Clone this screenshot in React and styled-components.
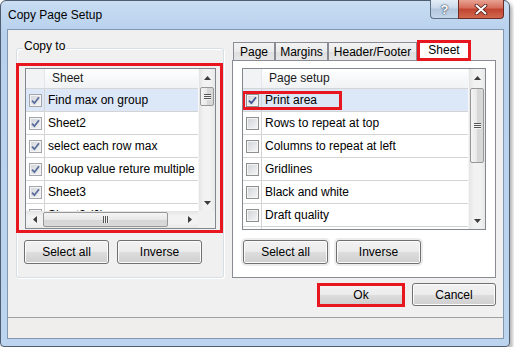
import styled, { createGlobalStyle } from "styled-components";

const GlobalStyle = createGlobalStyle`
  html, body {
    margin: 0;
    padding: 0;
    background: #fff;
  }
  body {
    font-family: "Liberation Sans", Arial, sans-serif;
    font-size: 12px;
    color: #000;
  }
  * {
    box-sizing: border-box;
  }
`;

const RED = "#e8161f";

const leftRows = [
  { label: "Find max on group", checked: true, selected: true },
  { label: "Sheet2", checked: true },
  { label: "select each row max", checked: true },
  { label: "lookup value reture multiple", checked: true },
  { label: "Sheet3", checked: true },
  { label: "Sheet3 (2)", checked: true },
];

const rightRows = [
  { label: "Print area", checked: true, selected: true, marked: true },
  { label: "Rows to repeat at top" },
  { label: "Columns to repeat at left" },
  { label: "Gridlines" },
  { label: "Black and white" },
  { label: "Draft quality" },
  { label: "" },
];

const tabs = [
  { label: "Page", width: 42 },
  { label: "Margins", width: 53 },
  { label: "Header/Footer", width: 89 },
  { label: "Sheet", width: 54, active: true },
];

const Arrow = ({ dir }) => {
  const pts = {
    up: "0,4 3.5,0 7,4",
    down: "0,0 3.5,4 7,0",
    left: "4,0 0,3.5 4,7",
    right: "0,0 4,3.5 0,7",
  }[dir];
  const vertical = dir === "up" || dir === "down";
  return (
    <svg width={vertical ? 7 : 4} height={vertical ? 4 : 7} viewBox={vertical ? "0 0 7 4" : "0 0 4 7"}>
      <polygon points={pts} fill="#3c3c3c" />
    </svg>
  );
};

const CheckBox = ({ checked, faded }) => (
  <Box $faded={faded}>
    {checked && (
      <svg width="9" height="9" viewBox="0 0 9 9">
        <path d="M1 4.6 L3.4 7.2 L8 1.2" fill="none" stroke={faded ? "#5a6e9c" : "#3f5593"} strokeWidth="1.8" />
      </svg>
    )}
  </Box>
);

const VScroll = ({ thumbTop, thumbHeight }) => (
  <VTrack>
    <ArrowCell>
      <Arrow dir="up" />
    </ArrowCell>
    <VThumbArea>
      <VThumb style={{ top: thumbTop, height: thumbHeight }}>
        <Grip $vertical />
      </VThumb>
    </VThumbArea>
    <ArrowCell>
      <Arrow dir="down" />
    </ArrowCell>
  </VTrack>
);

const ListView = ({ title, rows, width, height, thumbTop, thumbHeight, hscroll, faded }) => (
  <List style={{ width, height }}>
    <ListMain>
      <ListBody>
        <HeaderRow>
          <HeaderCheck />
          <HeaderText>{title}</HeaderText>
        </HeaderRow>
        {rows.map((r, i) => (
          <Row key={i} $selected={r.selected}>
            <CheckCell>{r.label && <CheckBox checked={r.checked} faded={faded} />}</CheckCell>
            <TextCell>{r.label}</TextCell>
            {r.marked && <RowMark />}
          </Row>
        ))}
      </ListBody>
      <VScroll thumbTop={thumbTop} thumbHeight={thumbHeight} />
    </ListMain>
    {hscroll && (
      <HScrollRow>
        <HTrack>
          <HArrowCell>
            <Arrow dir="left" />
          </HArrowCell>
          <HThumbArea>
            <HThumb>
              <Grip />
            </HThumb>
          </HThumbArea>
          <HArrowCell>
            <Arrow dir="right" />
          </HArrowCell>
        </HTrack>
        <Corner />
      </HScrollRow>
    )}
  </List>
);

export default function App() {
  return (
    <>
      <GlobalStyle />
      <Window>
        <TitleBar>
          <Title>Copy Page Setup</Title>
          <CaptionButtons>
            <HelpButton>?</HelpButton>
            <CloseButton>
              <svg width="14" height="11" viewBox="0 0 14 11">
                <path d="M2.5 1.5 L11.5 9.5 M11.5 1.5 L2.5 9.5" stroke="#4a1a16" strokeWidth="3.6" strokeLinecap="round" />
                <path d="M2.5 1.5 L11.5 9.5 M11.5 1.5 L2.5 9.5" stroke="#fff" strokeWidth="2" strokeLinecap="round" />
              </svg>
            </CloseButton>
          </CaptionButtons>
        </TitleBar>
        <Client>
          <Body>
            <GroupBox>
              <Legend>Copy to</Legend>
              <LeftFrame>
                <ListView
                  title="Sheet"
                  rows={leftRows}
                  width={191}
                  height={161}
                  thumbTop={1}
                  thumbHeight={19}
                  hscroll
                  faded
                />
              </LeftFrame>
              <ButtonRow>
                <Button>Select all</Button>
                <Button>Inverse</Button>
              </ButtonRow>
            </GroupBox>
            <TabControl>
              <TabRow>
                {tabs.map((t) => (
                  <Tab key={t.label} $active={t.active} style={{ width: t.width }}>
                    {t.label}
                  </Tab>
                ))}
              </TabRow>
              <TabPanel>
                <ListView
                  title="Page setup"
                  rows={rightRows}
                  width={244}
                  height={162}
                  thumbTop={2}
                  thumbHeight={75}
                />
                <PanelButtonRow>
                  <Button $halo>Select all</Button>
                  <Button $halo>Inverse</Button>
                </PanelButtonRow>
              </TabPanel>
            </TabControl>
          </Body>
          <DialogButtons>
            <OkFrame>
              <OkButton>Ok</OkButton>
            </OkFrame>
            <Button style={{ width: 84, height: 23 }}>Cancel</Button>
          </DialogButtons>
          <StatusBar />
        </Client>
      </Window>
    </>
  );
}

// Window frame

const Window = styled.div`
  width: 510px;
  height: 347px;
  border: 1px solid #4f5e6e;
  border-radius: 6px 6px 4px 4px;
  background: linear-gradient(#c9ddf3, #b8d1ed 30px, #bcd4ee);
  display: flex;
  flex-direction: column;
  padding: 0 5px 7px 6px;
  box-shadow: 2px 3px 4px rgba(0, 0, 0, 0.35);
`;

const TitleBar = styled.div`
  height: 28px;
  display: flex;
  justify-content: space-between;
  align-items: flex-start;
`;

const Title = styled.div`
  padding: 7px 0 0 1px;
  line-height: 14px;
  font-size: 12px;
  color: #000;
`;

const CaptionButtons = styled.div`
  display: flex;
  margin-top: -1px;
`;

const CaptionButton = styled.div`
  height: 19px;
  display: flex;
  align-items: center;
  justify-content: center;
  border: 1px solid #5d6f85;
  border-top: none;
`;

const HelpButton = styled(CaptionButton)`
  width: 28px;
  border-radius: 0 0 0 4px;
  border-right: none;
  background: linear-gradient(#e4edf7, #c9d8e9 45%, #b2c6dc 50%, #c3d6ea);
  color: #fff;
  font-weight: bold;
  font-size: 13px;
  text-shadow: 0 0 2px #2d3c50, 0 0 1px #2d3c50;
`;

const CloseButton = styled(CaptionButton)`
  width: 46px;
  border-color: #6b2a24;
  border-radius: 0 0 4px 0;
  background: linear-gradient(#e8a393, #d56b59 45%, #c0432f 50%, #d1694f);
`;

const Client = styled.div`
  flex: 1;
  border: 1px solid #8398b0;
  background: #f0f0f0;
  display: flex;
  flex-direction: column;
`;

const Body = styled.div`
  display: flex;
  align-items: flex-start;
  gap: 8px;
  padding: 12px 7px 0 8px;
`;

// Left group

const GroupBox = styled.div`
  position: relative;
  width: 208px;
  height: 230px;
  margin-top: 6px;
  padding-top: 14px;
  border: 1px solid #d5dfe5;
  border-radius: 3px;
  box-shadow: inset 1px 1px 0 #fff, 1px 1px 0 #fff;
`;

const Legend = styled.span`
  position: absolute;
  top: -10px;
  left: 6px;
  padding: 0 1px;
  line-height: 14px;
  background: #f0f0f0;
`;

const LeftFrame = styled.div`
  width: 207px;
  height: 170px;
  margin-left: -1px;
  padding: 2px 4px 1px 6px;
  border: 3px solid ${RED};
`;

const ButtonRow = styled.div`
  display: flex;
  gap: 8px;
  margin-top: 7px;
  padding-left: 7px;
`;

const Button = styled.div`
  width: 85px;
  height: 24px;
  display: flex;
  align-items: center;
  justify-content: center;
  border: 1px solid #707070;
  border-radius: 3px;
  background: linear-gradient(#f2f2f2, #ebebeb 50%, #dddddd 51%, #cfcfcf);
  box-shadow: inset 0 0 0 1px #fcfcfc${(p) => (p.$halo ? ", 0 0 0 2px #ececec" : "")};
  color: #000;
`;

// Tabs

const TabControl = styled.div`
  width: 264px;
  display: flex;
  flex-direction: column;
`;

const TabRow = styled.div`
  height: 18px;
  display: flex;
  align-items: flex-end;
  padding-left: 1px;
`;

const Tab = styled.div`
  height: ${(p) => (p.$active ? "21px" : "18px")};
  margin-bottom: ${(p) => (p.$active ? "-1px" : "0")};
  position: relative;
  z-index: ${(p) => (p.$active ? 1 : 0)};
  display: flex;
  align-items: center;
  justify-content: center;
  border: ${(p) => (p.$active ? `3px solid ${RED}` : "1px solid #898c95")};
  border-bottom: ${(p) => (p.$active ? `3px solid ${RED}` : "none")};
  background: ${(p) => (p.$active ? "#fff" : "linear-gradient(#f3f3f3, #ebebeb 50%, #dedede 51%, #e6e6e6)")};
  padding-bottom: ${(p) => (p.$active ? "2px" : "0")};
`;

const TabPanel = styled.div`
  height: 218px;
  border: 1px solid #898c95;
  background: #fff;
  padding: 7px 0 0 9px;
`;

const PanelButtonRow = styled.div`
  display: flex;
  gap: 8px;
  margin-top: 10px;
  padding-left: 1px;
`;

// List view

const List = styled.div`
  border: 1px solid #828790;
  background: #fff;
  display: flex;
  flex-direction: column;
  overflow: hidden;
`;

const ListMain = styled.div`
  flex: 1;
  min-height: 0;
  display: flex;
`;

const ListBody = styled.div`
  flex: 1;
  overflow: hidden;
`;

const HeaderRow = styled.div`
  height: 20px;
  display: flex;
  border-bottom: 1px solid #d5d5d5;
  background: linear-gradient(#ffffff, #f7f8fa 50%, #f1f2f4);
`;

const HeaderCheck = styled.div`
  width: 19px;
  border-right: 1px solid #e4e6ea;
  background: #f2f3f5;
`;

const HeaderText = styled.div`
  flex: 1;
  padding-left: 7px;
  line-height: 19px;
  color: #1a1a1a;
`;

const Row = styled.div`
  position: relative;
  height: 23px;
  display: flex;
  border-bottom: 1px solid #d4d4d4;
  background: ${(p) => (p.$selected ? "#dce7f8" : "#fff")};
`;

const CheckCell = styled.div`
  width: 19px;
  border-right: 1px solid #d4d4d4;
  display: flex;
  align-items: center;
  justify-content: center;
`;

const TextCell = styled.div`
  flex: 1;
  padding-left: 3px;
  line-height: 22px;
  white-space: nowrap;
  overflow: hidden;
`;

const RowMark = styled.div`
  position: absolute;
  left: -1px;
  top: 2px;
  width: 100px;
  height: 19px;
  border: 3px solid ${RED};
`;

const Box = styled.span`
  width: 13px;
  height: 13px;
  display: flex;
  align-items: center;
  justify-content: center;
  border: 1px solid ${(p) => (p.$faded ? "#a3a6ab" : "#8e8f8f")};
  background: linear-gradient(135deg, #cfd2d7, #f7f7f7);
  box-shadow: inset 0 0 0 1px #f4f4f4;
`;

// Scrollbars

const VTrack = styled.div`
  width: 17px;
  display: flex;
  flex-direction: column;
  background: linear-gradient(90deg, #e4e4e4, #f2f2f2 30%, #f2f2f2 70%, #e8e8e8);
  border-left: 1px solid #f6f6f6;
`;

const ArrowCell = styled.div`
  height: 17px;
  display: flex;
  align-items: center;
  justify-content: center;
`;

const VThumbArea = styled.div`
  flex: 1;
  position: relative;
`;

const VThumb = styled.div`
  position: absolute;
  left: 1px;
  right: 1px;
  border: 1px solid #979797;
  border-radius: 2px;
  background: linear-gradient(90deg, #f4f4f4, #e8e8e8 50%, #d6d6d6 51%, #d9d9d9);
  display: flex;
  align-items: center;
  justify-content: center;
`;

const Grip = styled.span`
  width: ${(p) => (p.$vertical ? "7px" : "6px")};
  height: ${(p) => (p.$vertical ? "6px" : "7px")};
  background: ${(p) =>
    p.$vertical
      ? "repeating-linear-gradient(#555 0 1px, #f4f4f4 1px 2px)"
      : "repeating-linear-gradient(90deg, #555 0 1px, #f4f4f4 1px 2px)"};
`;

const HScrollRow = styled.div`
  height: 17px;
  display: flex;
`;

const HTrack = styled.div`
  flex: 1;
  display: flex;
  background: linear-gradient(#e4e4e4, #f2f2f2 30%, #f2f2f2 70%, #e8e8e8);
`;

const HArrowCell = styled.div`
  width: 17px;
  display: flex;
  align-items: center;
  justify-content: center;
`;

const HThumbArea = styled.div`
  flex: 1;
  display: flex;
  align-items: stretch;
  padding: 1px 0;
`;

const HThumb = styled.div`
  width: 125px;
  border: 1px solid #979797;
  border-radius: 2px;
  background: linear-gradient(#f4f4f4, #e8e8e8 50%, #d6d6d6 51%, #d9d9d9);
  display: flex;
  align-items: center;
  justify-content: center;
`;

const Corner = styled.div`
  width: 17px;
  background: #f0f0f0;
`;

// Dialog buttons and status bar

const DialogButtons = styled.div`
  display: flex;
  justify-content: flex-end;
  align-items: flex-start;
  gap: 7px;
  margin-top: 5px;
  padding-right: 7px;
`;

const OkFrame = styled.div`
  width: 88px;
  height: 24px;
  border: 3px solid ${RED};
  display: flex;
`;

const OkButton = styled.div`
  flex: 1;
  display: flex;
  align-items: center;
  justify-content: center;
  background: linear-gradient(#f2f2f2, #ebebeb 50%, #dddddd 51%, #cfcfcf);
`;

const StatusBar = styled.div`
  margin-top: auto;
  height: 21px;
  border-top: 1px solid #a0a0a0;
  background: #f0eeec;
`;
